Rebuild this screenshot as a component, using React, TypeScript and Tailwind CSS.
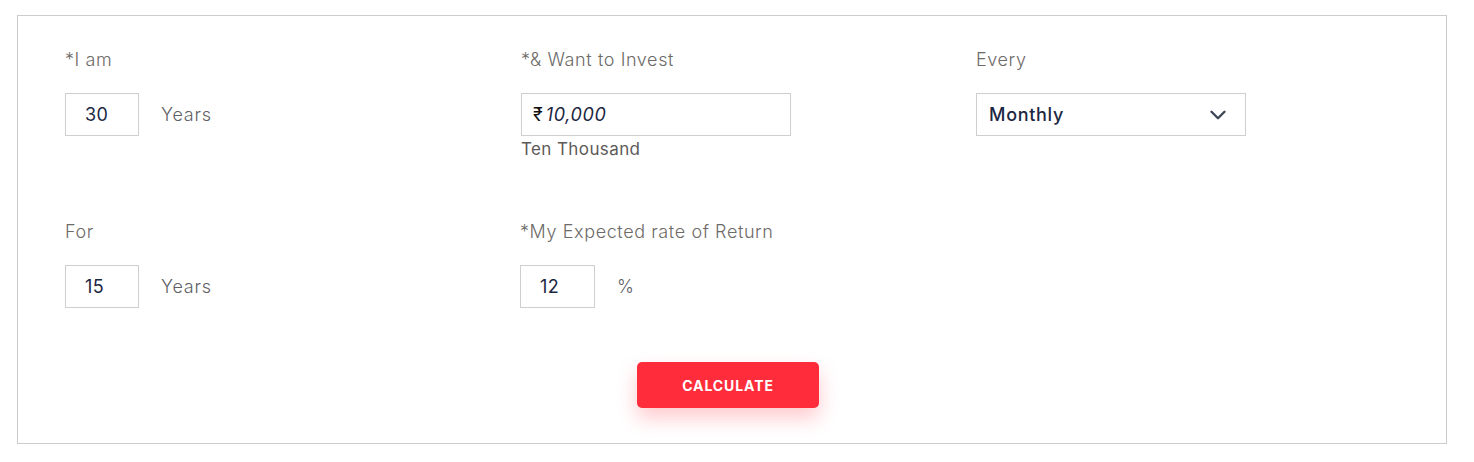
import { ChevronDown } from "lucide-react";

const font = { fontFamily: "Inter, 'Noto Sans', sans-serif" };

const Label = ({ text }: { text: string }) => (
  <p className="h-[26px] text-[18px] leading-[26px] font-light text-[#6d6a68] tracking-[0.6px]">{text}</p>
);

const SmallBox = ({ value, unit, w = "w-[74px]" }: { value: string; unit: string; w?: string }) => (
  <div className="mt-[20px] flex items-center">
    <div className={`${w} h-[43px] border border-[#cfcfcf] flex items-center pl-[19px] text-[18px] tracking-[0.4px] text-[#1c2742]`}>{value}</div>
    <span className="ml-[22px] text-[18px] font-light tracking-[0.8px] text-[#5f5f66]">{unit}</span>
  </div>
);

const App = () => {
  return (
    <div className="bg-white w-[1474px] h-[462px] pt-[15px] pl-[17px]" style={font}>
      <div className="w-[1430px] h-[429px] border border-[#cccccc] pt-[31px] pl-[47px]">
        <div className="grid grid-cols-[456px_455px_300px] h-[172px]">
          <div>
            <Label text="*I am" />
            <SmallBox value="30" unit="Years" />
          </div>
          <div>
            <Label text="*& Want to Invest" />
            <div className="mt-[20px] w-[270px] h-[43px] border border-[#cfcfcf] flex items-center pl-[11px] text-[18px] text-[#1c2742]">
              <span className="not-italic text-[#111] mr-[3px]">₹</span>
              <span className="italic tracking-[0.6px]">10,000</span>
            </div>
            <p className="mt-[1px] text-[17px] leading-[24px] tracking-[0.4px] text-[#5d5a58]">Ten Thousand</p>
          </div>
          <div>
            <Label text="Every" />
            <div className="mt-[20px] w-[270px] h-[43px] border border-[#cfcfcf] flex items-center justify-between pl-[12px] pr-[14px] text-[18px] font-[450] tracking-[0.7px] text-[#1c2742]">
              <span>Monthly</span>
              <ChevronDown size={26} strokeWidth={2.2} className="text-[#3c4656]" />
            </div>
          </div>
        </div>
        <div className="grid grid-cols-[455px_456px_300px]">
          <div>
            <Label text="For" />
            <SmallBox value="15" unit="Years" />
          </div>
          <div>
            <Label text="*My Expected rate of Return" />
            <SmallBox value="12" unit="%" w="w-[75px]" />
          </div>
          <div />
        </div>
        <div className="mt-[54px] w-[1326px] flex justify-center">
          <button className="w-[182px] h-[46px] rounded-[5px] bg-[#ff2d3b] text-white text-[14px] font-bold tracking-[0.9px] shadow-[0_10px_20px_rgba(255,45,59,0.25)]">
            CALCULATE
          </button>
        </div>
      </div>
    </div>
  );
};

export default App;
